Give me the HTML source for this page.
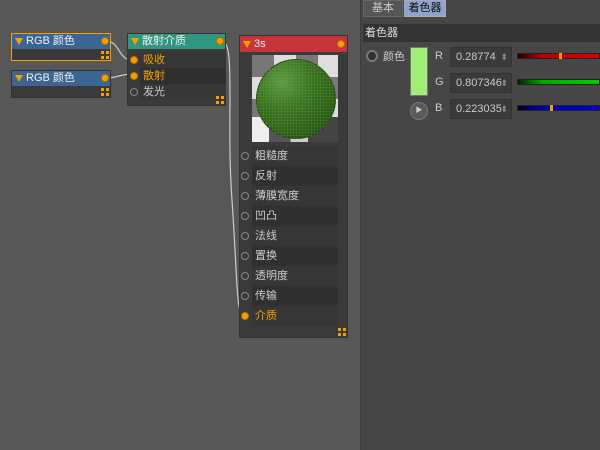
<!DOCTYPE html><html><head><meta charset="utf-8"><style>
*{margin:0;padding:0;box-sizing:border-box}
body{width:600px;height:450px;overflow:hidden;background:#575757;position:relative;font-family:"Liberation Sans","Noto Sans CJK SC",sans-serif;font-size:11px;color:#ccc}
.a{position:absolute}
.hd{color:#eee;font-size:11px;line-height:16px;padding-left:14px}
.tri{position:absolute;left:3px;top:5px;width:0;height:0;border-left:4px solid transparent;border-right:4px solid transparent;border-top:7px solid #f5a000}
.dot{position:absolute;width:8px;height:8px;border-radius:50%;background:#f5a000;border:1px solid #c07000}
.ring{position:absolute;width:8px;height:8px;border-radius:50%;border:1.5px solid #888}
.grip{position:absolute;width:8px;height:8px;background:
linear-gradient(#f5a000,#f5a000) 0 0/3px 3px no-repeat,linear-gradient(#f5a000,#f5a000) 5px 0/3px 3px no-repeat,linear-gradient(#f5a000,#f5a000) 0 5px/3px 3px no-repeat,linear-gradient(#f5a000,#f5a000) 5px 5px/3px 3px no-repeat}
.row{position:absolute;left:12px;width:86px;height:20px;line-height:20px;padding-left:3px;color:#ccc}
.fld{position:absolute;left:450px;width:62px;height:20px;background:#3a3a3a;border:1px solid #333;color:#c8c8c8;line-height:18px;padding-left:5px}
.fld:after{content:"⬍";position:absolute;right:3px;color:#888;font-size:9px}
.sl{position:absolute;left:517px;width:83px;height:6px;border:1px solid #222}
</style></head><body>
<svg class="a" style="left:0;top:0" width="360" height="450">
<path d="M106 41 C120 41,118 60,132 60" stroke="#ccc" stroke-width="1.2" fill="none"/>
<path d="M106 78 C118 78,120 74,132 74" stroke="#ccc" stroke-width="1.2" fill="none"/>
<path d="M222 41 C236 41,226 120,232 200 C238 290,236 312,244 316" stroke="#ccc" stroke-width="1.2" fill="none"/>
</svg>
<div class="a" style="left:11px;top:33px;width:100px;height:28px;background:#3a3a3a;border:1px solid #f5a000">
<div class="hd" style="background:#3b6694;height:15px;line-height:15px">RGB 颜色</div><div class="tri" style="top:4px"></div>
<div class="dot" style="left:89px;top:3px"></div><div class="grip" style="left:89px;top:17px"></div></div>
<div class="a" style="left:11px;top:70px;width:100px;height:28px;background:#3a3a3a;border:1px solid #333">
<div class="hd" style="background:#3b6694;height:15px;line-height:15px">RGB 颜色</div><div class="tri" style="top:4px"></div>
<div class="dot" style="left:89px;top:3px"></div><div class="grip" style="left:89px;top:17px"></div></div>
<div class="a" style="left:127px;top:33px;width:99px;height:73px;background:#3a3a3a;border:1px solid #333">
<div class="hd" style="background:#2f9680;height:15px;line-height:15px">散射介质</div><div class="tri" style="top:4px"></div>
<div class="dot" style="left:88px;top:3px"></div>
<div class="row" style="top:18px;height:16px;line-height:16px;background:#363636;color:#f5a000">吸收</div>
<div class="row" style="top:34px;height:16px;line-height:16px;background:#303030;color:#f5a000">散射</div>
<div class="row" style="top:50px;height:16px;line-height:16px;background:#363636">发光</div>
<div class="dot" style="left:2px;top:22px"></div><div class="dot" style="left:2px;top:38px"></div><div class="ring" style="left:2px;top:54px"></div>
<div class="grip" style="left:88px;top:62px"></div></div>
<div class="a" style="left:239px;top:35px;width:109px;height:303px;background:#3a3a3a;border:1px solid #333">
<div class="hd" style="background:#c8323a;height:16px">3s</div><div class="tri"></div>
<div class="dot" style="left:97px;top:4px"></div>
<div class="a" style="left:12px;top:19px;width:86px;height:87px;overflow:hidden;background:
conic-gradient(#ddd 25%,#777 0 50%,#ddd 0 75%,#777 0) 0 0/44px 44px">
<div class="a" style="left:0;top:62px;width:86px;height:25px;background:linear-gradient(90deg,#eee 0 20%,#555 20% 45%,#ccc 45% 65%,#444 65%)"></div>
<div class="a" style="left:4px;top:4px;width:80px;height:80px;border-radius:50%;background:radial-gradient(circle at 33% 28%,#5f9a48,#3c7426 35%,#2b5c18 70%,#1e4010);box-shadow:inset 0 0 0 1px #2a4a1a"></div>
<div class="a" style="left:4px;top:4px;width:80px;height:80px;border-radius:50%;background:radial-gradient(#6a3 0.6px,transparent 1px) 0 0/3px 3px;opacity:.5"></div></div>
<div class="row" style="top:110px;background:#363636">粗糙度</div>
<div class="row" style="top:130px;background:#303030">反射</div>
<div class="row" style="top:150px;background:#363636">薄膜宽度</div>
<div class="row" style="top:170px;background:#303030">凹凸</div>
<div class="row" style="top:190px;background:#363636">法线</div>
<div class="row" style="top:210px;background:#303030">置换</div>
<div class="row" style="top:230px;background:#363636">透明度</div>
<div class="row" style="top:250px;background:#303030">传输</div>
<div class="row" style="top:270px;background:#363636;color:#f5a000">介质</div>
<div class="ring" style="left:1px;top:116px"></div><div class="ring" style="left:1px;top:136px"></div><div class="ring" style="left:1px;top:156px"></div><div class="ring" style="left:1px;top:176px"></div><div class="ring" style="left:1px;top:196px"></div><div class="ring" style="left:1px;top:216px"></div><div class="ring" style="left:1px;top:236px"></div><div class="ring" style="left:1px;top:256px"></div>
<div class="dot" style="left:1px;top:276px"></div>
<div class="grip" style="left:98px;top:292px"></div></div>
<div class="a" style="left:360px;top:0;width:240px;height:450px;background:#464646;border-left:1px solid #3c3c3c"></div>
<div class="a" style="left:363px;top:0;width:40px;height:17px;background:#555;border:1px solid #666;color:#ccc;line-height:15px;text-align:center">基本</div>
<div class="a" style="left:404px;top:0;width:42px;height:17px;background:#8ea4cc;border:1px solid #aab;color:#111;line-height:15px;text-align:center">着色器</div>
<div class="a" style="left:363px;top:24px;width:237px;height:18px;background:#333;color:#ddd;line-height:18px;padding-left:2px">着色器</div>
<div class="a" style="left:366px;top:50px;width:12px;height:12px;border-radius:50%;background:#333;border:2px solid #777"></div>
<div class="a" style="left:383px;top:48px;color:#ccc">颜色</div>
<div class="a" style="left:410px;top:47px;width:18px;height:49px;background:#a0ee78;border:1px solid #777"></div>
<div class="a" style="left:410px;top:102px;width:18px;height:18px;border-radius:50%;background:#5a5a5a;border:1px solid #777;color:#ccc;font-size:7px;text-align:center;line-height:16px">▶</div>
<div class="a" style="left:435px;top:50px">R</div><div class="a" style="left:435px;top:76px">G</div><div class="a" style="left:435px;top:102px">B</div>
<div class="fld" style="top:47px">0.28774</div>
<div class="fld" style="top:73px">0.807346</div>
<div class="fld" style="top:99px">0.223035</div>
<div class="sl" style="top:53px;background:linear-gradient(90deg,#200,#b00 30%,#d00)"><div class="a" style="left:41px;top:-1px;width:3px;height:6px;background:#f5a000"></div></div>
<div class="sl" style="top:79px;background:linear-gradient(90deg,#020,#0a0 30%,#0c0)"></div>
<div class="sl" style="top:105px;background:linear-gradient(90deg,#002,#00a 30%,#00c)"><div class="a" style="left:32px;top:-1px;width:3px;height:6px;background:#f5a000"></div></div>
</body></html>
